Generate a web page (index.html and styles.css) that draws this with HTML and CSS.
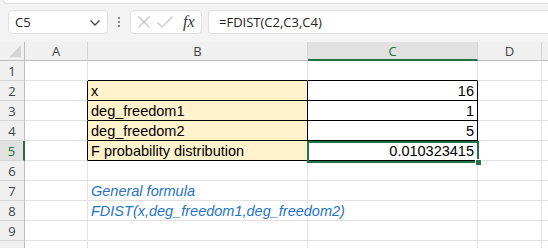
FILE: index.html
```html
<!DOCTYPE html>
<html>
<head>
<meta charset="utf-8">
<link rel="stylesheet" href="styles.css">
</head>
<body>
<div class="app">
  <div class="topbar">
    <div class="ribbon-edge"></div>
    <div class="formula-row">
      <div class="namebox">
        <span class="name">C5</span>
        <svg class="chev" width="12" height="8" viewBox="0 0 12 8"><path d="M1.5 1.5 L6 6 L10.5 1.5" fill="none" stroke="#444" stroke-width="1.3"/></svg>
      </div>
      <div class="grip">
        <span></span><span></span><span></span>
      </div>
      <div class="fxbox">
        <svg width="14" height="14" viewBox="0 0 14 14"><path d="M1.5 1.5 L12.5 12.5 M12.5 1.5 L1.5 12.5" stroke="#c4c4c4" stroke-width="1.2" fill="none"/></svg>
        <svg width="18" height="14" viewBox="0 0 18 14"><path d="M1.5 7.5 L6 12 L16.5 1.5" stroke="#c4c4c4" stroke-width="1.2" fill="none"/></svg>
        <span class="fx">fx</span>
      </div>
      <div class="formula">=FDIST(C2,C3,C4)</div>
    </div>
  </div>
  <div class="sheet">
    <div class="corner"><span class="tri"></span></div>
    <div class="ch">A</div>
    <div class="ch">B</div>
    <div class="ch sel">C</div>
    <div class="ch">D</div>
    <div class="ch last"></div>

    <div class="rh">1</div>
    <div class="c"></div>
    <div class="c bb"></div>
    <div class="c bb"></div>
    <div class="c"></div>
    <div class="c last"></div>

    <div class="rh">2</div>
    <div class="c br"></div>
    <div class="c lab box">x</div>
    <div class="c num box">16</div>
    <div class="c"></div>
    <div class="c last"></div>

    <div class="rh">3</div>
    <div class="c br"></div>
    <div class="c lab box">deg_freedom1</div>
    <div class="c num box">1</div>
    <div class="c"></div>
    <div class="c last"></div>

    <div class="rh">4</div>
    <div class="c br"></div>
    <div class="c lab box">deg_freedom2</div>
    <div class="c num box">5</div>
    <div class="c"></div>
    <div class="c last"></div>

    <div class="rh active">5</div>
    <div class="c br"></div>
    <div class="c lab box">F probability distribution</div>
    <div class="c num box">0.010323415</div>
    <div class="c"></div>
    <div class="c last"></div>

    <div class="rh">6</div>
    <div class="c"></div>
    <div class="c"></div>
    <div class="c"></div>
    <div class="c"></div>
    <div class="c last"></div>

    <div class="rh">7</div>
    <div class="c"></div>
    <div class="c note">General formula</div>
    <div class="c"></div>
    <div class="c"></div>
    <div class="c last"></div>

    <div class="rh">8</div>
    <div class="c"></div>
    <div class="c note">FDIST(x,deg_freedom1,deg_freedom2)</div>
    <div class="c"></div>
    <div class="c"></div>
    <div class="c last"></div>

    <div class="rh">9</div>
    <div class="c"></div>
    <div class="c"></div>
    <div class="c"></div>
    <div class="c"></div>
    <div class="c last"></div>

    <div class="rh"></div>
    <div class="c"></div>
    <div class="c"></div>
    <div class="c"></div>
    <div class="c"></div>
    <div class="c last"></div>

    <div class="selection"><span class="handle"></span></div>
  </div>
</div>
</body>
</html>
```

FILE: styles.css
```css
* { box-sizing: border-box; }
html, body { margin: 0; padding: 0; }
body {
  width: 548px;
  height: 248px;
  overflow: hidden;
  background: #f3f3f3;
  font-family: "Liberation Sans", Arial, sans-serif;
}
.app { width: 548px; height: 248px; overflow: hidden; }

.topbar {
  height: 42px;
  background: #f3f3f3;
  position: relative;
}
.ribbon-edge {
  height: 4px;
  margin-left: 3px;
  background: #ffffff;
  border-bottom: 1px solid #dedede;
  border-left: 1px solid #dedede;
  border-bottom-left-radius: 4px;
}
.formula-row {
  display: flex;
  align-items: center;
  height: 24px;
  margin-top: 6px;
  padding-left: 8px;
}
.namebox {
  width: 100px;
  height: 24px;
  background: #fff;
  border: 1px solid #e0e0e0;
  border-radius: 4px;
  display: flex;
  align-items: center;
  justify-content: space-between;
  padding: 0 6px 0 6px;
  font-family: "Open Sans", "Noto Sans", sans-serif;
  font-size: 13px;
  color: #222;
}
.namebox .chev { margin-top: 1px; }
.grip {
  width: 22px;
  display: flex;
  flex-direction: column;
  align-items: center;
  gap: 2px;
}
.grip span {
  width: 2px;
  height: 2px;
  background: #8a8a8a;
}
.fxbox {
  width: 72px;
  height: 24px;
  background: #fff;
  border: 1px solid #e0e0e0;
  border-radius: 4px;
  display: flex;
  align-items: center;
  padding-left: 6px;
  gap: 5px;
}
.fx {
  font-family: "Liberation Serif", "DejaVu Serif", serif;
  font-style: italic;
  font-size: 16px;
  color: #333;
  margin-left: 4px;
}
.formula {
  flex: 1;
  margin-left: 6px;
  height: 24px;
  background: #fff;
  border: 1px solid #e0e0e0;
  border-right: none;
  border-radius: 4px 0 0 4px;
  padding-left: 10px;
  line-height: 22px;
  font-family: "Open Sans", "Noto Sans", sans-serif;
  font-size: 13px;
  color: #222;
}

.sheet {
  position: relative;
  display: grid;
  grid-template-columns: 25px 63px 220px 170px 64px 1fr;
  grid-template-rows: 19px repeat(10, 20px);
  background: #fff;
}
.corner, .ch, .rh {
  background: #f0f0f0;
  font-family: "Open Sans", "Noto Sans", sans-serif;
  font-size: 13px;
  color: #444;
  display: flex;
  align-items: center;
  justify-content: center;
}
.corner {
  border-right: 1px solid #bdbdbd;
  border-bottom: 1px solid #bdbdbd;
  position: relative;
}
.tri {
  position: absolute;
  right: 3px;
  bottom: 3px;
  width: 0;
  height: 0;
  border-left: 12px solid transparent;
  border-bottom: 12px solid #d6d6d6;
}
.ch {
  border-right: 1px solid #d4d4d4;
  border-bottom: 1px solid #bdbdbd;
}
.ch.sel {
  background: #e1e1e1;
  border-bottom: 2px solid #217346;
  color: #217346;
}
.ch.last, .c.last { border-right: none; }
.rh {
  border-right: 1px solid #bdbdbd;
  border-bottom: 1px solid #d4d4d4;
}
.rh.active {
  background: #e1e1e1;
  border-right: 2px solid #217346;
  color: #217346;
}
.c {
  border-right: 1px solid #e1e1e1;
  border-bottom: 1px solid #e1e1e1;
  font-size: 14.5px;
  color: #000;
  white-space: nowrap;
  line-height: 19px;
  padding: 1px 3px 0 3px;
}
.c.bb { border-bottom-color: #000; }
.c.br { border-right-color: #000; }
.c.box {
  border-right-color: #000;
  border-bottom-color: #000;
}
.c.lab { background: #fff2cc; }
.c.num { text-align: right; }
.c.note {
  overflow: visible;
  color: #1f74c6;
  font-style: italic;
}

.selection {
  position: absolute;
  left: 307px;
  top: 99px;
  width: 172px;
  height: 22px;
  border: 2px solid #217346;
  pointer-events: none;
}
.handle {
  position: absolute;
  right: -5px;
  bottom: -5px;
  width: 7px;
  height: 7px;
  background: #217346;
  border: 1px solid #fff;
}
```
